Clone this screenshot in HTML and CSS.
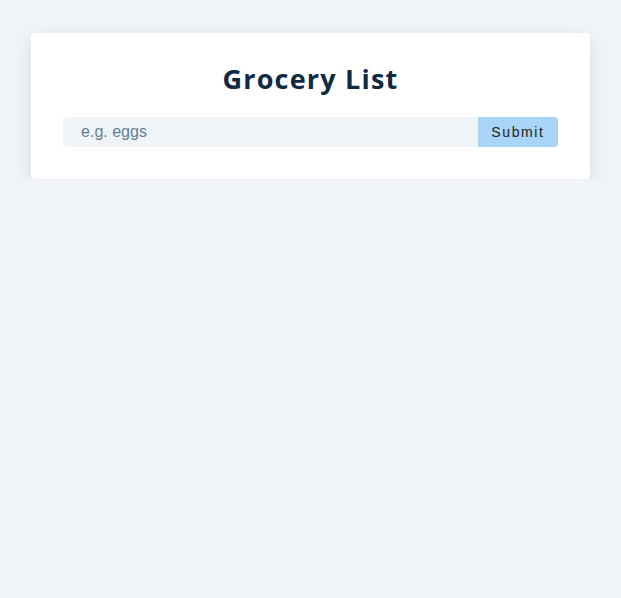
FILE: index.html
```html
<!DOCTYPE html>
<html>
  <head>
    <meta charset="UTF-8" />
    <title>Grocery List</title>
    <link rel="stylesheet" href="styles.css">
  </head>
  <body>
    <section class="container">
      <h2 class="title">Grocery List</h2>
      <form class="grocery-form">
        <input type="text" class="grocery-input" id="grocery" placeholder="e.g. eggs" />
        <button type="submit" class="submit-btn">Submit</button>
      </form>
    </section>
  </body>
</html>
```

FILE: styles.css
```css
body {
  margin: 0;
  padding: 0;
  background: #f0f4f8;
  font-family: "Liberation Sans", Arial, sans-serif;
  color: #102a43;
}
.container {
  width: 560px;
  max-width: 90%;
  margin: 33px auto 0;
  background: #fff;
  border-radius: 4px;
  padding: 32px;
  box-sizing: border-box;
  box-shadow: 0 6px 18px rgba(0, 0, 0, 0.1);
}
.title {
  margin: -3px 0 21px;
  text-align: center;
  font-family: "Open Sans", sans-serif;
  font-size: 27px;
  font-weight: 700;
  letter-spacing: 1.2px;
  color: #102a43;
  line-height: 1.25;
}
.grocery-form {
  display: flex;
}
.grocery-input {
  flex: 1;
  height: 30px;
  padding: 0 18px;
  border: none;
  border-radius: 3px 0 0 3px;
  background: #f0f4f8;
  font-family: "Liberation Sans", Arial, sans-serif;
  font-size: 16px;
  color: #102a43;
  outline: none;
}
.grocery-input::placeholder {
  color: #627d98;
}
.submit-btn {
  width: 80px;
  height: 30px;
  border: none;
  border-radius: 0 4px 4px 0;
  background: #a8d4f7;
  font-family: "Liberation Sans", Arial, sans-serif;
  font-size: 14px;
  letter-spacing: 1.6px;
  color: #222;
  cursor: pointer;
}
```
